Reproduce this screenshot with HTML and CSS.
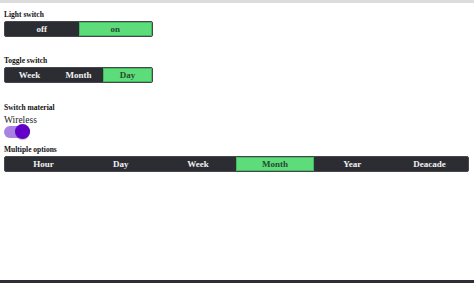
FILE: index.html
```html
<!DOCTYPE html>
<html>
<head>
<meta charset="utf-8">
<link rel="stylesheet" href="styles.css">
</head>
<body>
<div class="page">
  <div class="topbar"></div>
  <main class="content">
    <section class="group first">
      <div class="label">Light switch</div>
      <div class="seg seg-2">
        <div class="opt">off</div>
        <div class="opt active">on</div>
      </div>
    </section>
    <section class="group">
      <div class="label">Toggle switch</div>
      <div class="seg seg-3">
        <div class="opt">Week</div>
        <div class="opt">Month</div>
        <div class="opt active">Day</div>
      </div>
    </section>
    <section class="group loose">
      <div class="label">Switch material</div>
      <div class="wireless">Wireless</div>
      <div class="mswitch"><div class="track"></div><div class="knob"></div></div>
    </section>
    <section class="group tight">
      <div class="label">Multiple options</div>
      <div class="seg seg-6">
        <div class="opt">Hour</div>
        <div class="opt">Day</div>
        <div class="opt">Week</div>
        <div class="opt active">Month</div>
        <div class="opt">Year</div>
        <div class="opt">Deacade</div>
      </div>
    </section>
  </main>
  <div class="bottombar"></div>
</div>
</body>
</html>
```

FILE: styles.css
```css
html, body {
  margin: 0;
  padding: 0;
  background: #ffffff;
  font-family: "Liberation Serif", "DejaVu Serif", serif;
  color: #111;
}
.page {
  display: flex;
  flex-direction: column;
  min-height: 100vh;
}
.topbar {
  height: 3px;
  background: #dcdcdc;
}
.content {
  flex: 1;
  padding: 0 4px;
  display: flex;
  flex-direction: column;
}
.group {
  display: flex;
  flex-direction: column;
  margin-top: 19px;
}
.group.first {
  margin-top: 7px;
}
.group.loose {
  margin-top: 20px;
}
.group.tight {
  margin-top: 6px;
}
.label {
  font-size: 7.5px;
  font-weight: bold;
  line-height: 10px;
  height: 10px;
  margin-bottom: 1px;
  color: #111;
}
.seg {
  display: grid;
  height: 16px;
  box-sizing: border-box;
  background: #2c2d32;
  border: 1px solid #46474c;
  border-radius: 2px;
  overflow: hidden;
}
.seg-2 { width: 149px; grid-template-columns: 1fr 1fr; }
.seg-3 { width: 149px; grid-template-columns: 1fr 1fr 1fr; }
.seg-6 { width: 465px; grid-template-columns: repeat(6, 1fr); }
.opt {
  display: flex;
  align-items: center;
  justify-content: center;
  color: #f2f2f2;
  font-size: 9px;
  font-weight: bold;
}
.opt.active {
  background: #5ddd79;
  color: #2a4a33;
  box-shadow: inset 0 0 0 1px #45b862;
}
.wireless {
  font-family: "Liberation Serif", serif;
  font-size: 9.5px;
  line-height: 10px;
  height: 10px;
  margin-top: 1px;
  color: #222;
}
.mswitch {
  position: relative;
  width: 28px;
  height: 15px;
  margin-top: -1px;
}
.track {
  position: absolute;
  left: 0;
  top: 1.5px;
  width: 26px;
  height: 12px;
  border-radius: 6px;
  background: #a981e2;
}
.knob {
  position: absolute;
  left: 11px;
  top: 0;
  width: 15px;
  height: 15px;
  border-radius: 50%;
  background: #6200c8;
  box-shadow: 0 1px 1px rgba(0,0,0,0.25);
}
.bottombar {
  height: 3px;
  background: #2e2f36;
}
```
